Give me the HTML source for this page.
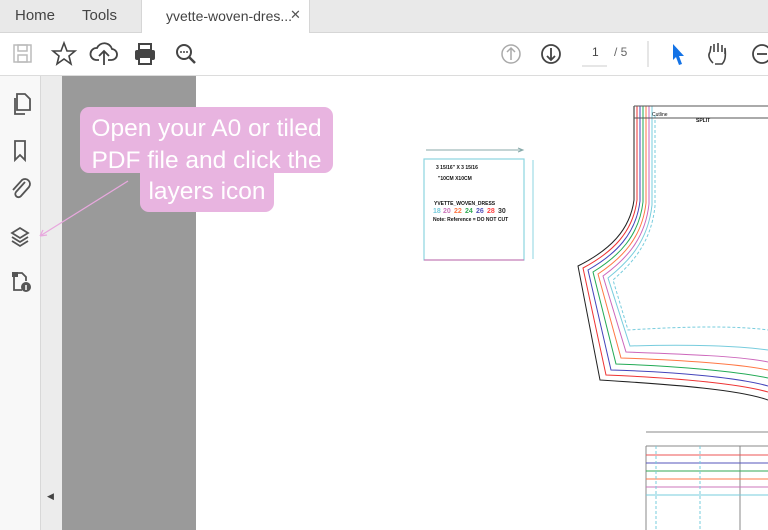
<!DOCTYPE html>
<html><head><meta charset="utf-8"><style>
body{margin:0;width:768px;height:530px;overflow:hidden;position:relative;font-family:"Liberation Sans","DejaVu Sans",sans-serif;background:#fff}
.tabs{position:absolute;left:0;top:0;width:768px;height:32px;background:#e9e9e9;border-bottom:1px solid #d6d6d6}
.t{position:absolute;top:7px;font-size:15px;color:#444}
.tab{position:absolute;left:141px;top:0;width:167px;height:33px;background:#fff;border-left:1px solid #d6d6d6;border-right:1px solid #d6d6d6}
.tb{position:absolute;top:33px;left:0;width:768px;height:42px;background:#fff;border-bottom:1px solid #dcdcdc}
.side{position:absolute;left:0;top:76px;width:40px;height:454px;background:#f8f8f8;border-right:1px solid #d8d8d8}
.strip{position:absolute;left:41px;top:76px;width:21px;height:454px;background:#ececec}
.gray{position:absolute;left:62px;top:76px;width:134px;height:454px;background:#9a9a9a}
.call{position:absolute;color:#fff;font-size:24.5px;line-height:33px;text-align:center;background:#e8b4e0;border-radius:9px;white-space:nowrap}
</style></head><body>
<div class="tabs"><span class="t" style="left:15px">Home</span><span class="t" style="left:82px">Tools</span>
<div class="tab"><span class="t" style="left:24px;font-size:14px;top:8px">yvette-woven-dres...</span><span class="t" style="left:148px;top:7px;font-size:13px;font-weight:bold;color:#555">✕</span></div></div>
<div class="tb">
<svg width="768" height="42" style="position:absolute;left:0;top:0" fill="none" stroke-width="2">
<rect x="14" y="12" width="17" height="17" stroke="#bbb" stroke-width="1.5"/><rect x="18" y="12" width="9" height="6" stroke="#bbb" stroke-width="1.5"/><rect x="18" y="22" width="9" height="7" stroke="#bbb" stroke-width="1.5"/>
<path d="M64 10 L67 18 L75 18 L69 23 L71 31 L64 26 L57 31 L59 23 L53 18 L61 18 Z" stroke="#444" stroke-width="1.6"/>
<path d="M99 27 H96 A6 6 0 0 1 97 15 A8 8 0 0 1 112 16 A5 5 0 0 1 111 27 H108 M104 32 V19 M99 23 L104 18 L109 23" stroke="#444" stroke-width="1.8"/>
<rect x="135" y="17" width="20" height="10" rx="2" fill="#444"/><rect x="139" y="11" width="12" height="6" stroke="#444"/><rect x="139" y="24" width="12" height="7" fill="#fff" stroke="#444"/>
<circle cx="184" cy="19" r="7" stroke="#444"/><path d="M189 24 L195 30" stroke="#444" stroke-width="2.5"/><circle cx="181" cy="19" r="1" fill="#444" stroke="none"/><circle cx="184" cy="19" r="1" fill="#444" stroke="none"/><circle cx="187" cy="19" r="1" fill="#444" stroke="none"/>
<circle cx="511" cy="21" r="9" stroke="#aaa" stroke-width="1.5"/><path d="M511 27 V15 M507 19 L511 15 L515 19" stroke="#aaa" stroke-width="1.5"/>
<circle cx="551" cy="21" r="9" stroke="#444" stroke-width="1.8"/><path d="M551 15 V27 M547 23 L551 27 L555 23" stroke="#444" stroke-width="1.8"/>
<path d="M582 33 H607" stroke="#ccc" stroke-width="1"/><path d="M648 8 V34" stroke="#ddd" stroke-width="1.5"/>
<path d="M673 11 L684 23 L679 23 L682 31 L679 32 L676 24 L673 27 Z" fill="#1473e6" stroke="none"/>
<path d="M713 30 C709 26 708 22 710 19 L711 13 M714 19 V11 M718 19 V10 M722 19 V12 M725 21 V15 C726 24 725 28 722 31 H715" stroke="#444" stroke-width="1.6"/>
<circle cx="762" cy="21" r="9" stroke="#444" stroke-width="1.8"/><path d="M757 21 H767" stroke="#444" stroke-width="1.8"/>
</svg>
<span style="position:absolute;left:592px;top:12px;font-size:12px;color:#444">1</span><span style="position:absolute;left:614px;top:12px;font-size:12px;color:#666">/ 5</span>
</div>
<div class="side"><svg width="40" height="230" fill="none" stroke="#555" stroke-width="1.8">
<path d="M15 22 V38 H25 M17 18 H25 L30 23 V34 H17 Z"/>
<path d="M15 65 V84 L20 79 L25 84 V65 Z"/>
<path d="M25 106 L16 116 A3 3 0 0 0 21 120 L29 111 A5 5 0 0 0 22 104 L13 114"/>
<path d="M20 152 L12 157 L20 162 L28 157 Z M12 161 L20 166 L28 161 M12 165 L20 170 L28 165"/>
<path d="M14 200 V214 H22 M14 197 H22 L26 201 V205" /><rect x="12" y="196" width="6" height="5" fill="#555" stroke="none"/><circle cx="26" cy="211" r="5" fill="#555" stroke="none"/><path d="M26 209 V214" stroke="#fff" stroke-width="1.5"/>
</svg></div>
<div class="strip"><span style="position:absolute;left:6px;top:415px;font-size:9px;color:#444">◀</span></div>
<div class="gray"></div>
<div class="call" style="left:80px;top:107px;width:253px;height:66px;padding-top:0;line-height:33px"><div style="margin-top:5px">Open your A0 or tiled</div><div style="margin-top:-1px">PDF file and click the</div></div>
<div class="call" style="left:140px;top:170px;width:134px;height:42px;line-height:44px;border-radius:0 0 9px 9px">layers icon</div>
<svg width="768" height="530" style="position:absolute;left:0;top:0" fill="none">
<path d="M128 181 L40 236 M40 236 L47 235 M40 236 L43 230" stroke="#e8a8de" stroke-width="1.3"/>
<path d="M426 150 H522 M518 148 L523 150 L518 152" stroke="#8aa"/>
<rect x="424" y="159" width="100" height="101" stroke="#8dd4e0" stroke-width="1.2"/><path d="M424 260 H524" stroke="#c6a"/>
<path d="M533 160 V259" stroke="#8dd4e0"/>
<g fill="#111" font-size="5" font-family="Liberation Sans" font-weight="bold"><text x="436" y="169">3 15/16" X 3 15/16</text><text x="438" y="180">"10CM X10CM</text><text x="434" y="205">YVETTE_WOVEN_DRESS</text><text x="433" y="221">Note: Reference = DO NOT CUT</text></g>
<g font-size="7" font-weight="bold" font-family="Liberation Sans"><text x="433" y="213" fill="#7cd">18</text><text x="443" y="213" fill="#c7b">20</text><text x="454" y="213" fill="#f74">22</text><text x="465" y="213" fill="#3a5">24</text><text x="476" y="213" fill="#55b">26</text><text x="487" y="213" fill="#f44">28</text><text x="498" y="213" fill="#333">30</text></g>
<g stroke-width="1">
<path d="M634 106 V200 C630 230 610 250 578 266 L600 380 C680 385 740 390 768 400" stroke="#222"/>
<path d="M637 106 V200 C633 232 613 252 583 268 L606 375 C680 378 740 384 768 392" stroke="#e33"/>
<path d="M640 106 V201 C636 234 616 254 588 270 L611 370 C680 372 740 378 768 386" stroke="#44b"/>
<path d="M643 106 V202 C639 236 619 256 593 272 L616 364 C680 366 740 372 768 378" stroke="#2a5"/>
<path d="M646 106 V203 C642 238 622 258 598 274 L621 358 C680 360 740 364 768 370" stroke="#f74"/>
<path d="M649 106 V204 C645 240 625 260 603 276 L626 352 C680 354 740 356 768 362" stroke="#c6b"/>
<path d="M652 106 V205 C648 242 628 262 608 278 L630 346 C690 344 740 346 768 350" stroke="#7cd"/>
<path d="M655 115 V206 C651 244 631 264 613 280 L628 330 C690 326 740 326 768 330" stroke="#7cd" stroke-dasharray="3 2"/>
<path d="M634 106 H768 M634 118 H768" stroke="#555"/>
<path d="M646 432 H768 M646 446 V530 M740 446 V530 M646 446 H768" stroke="#888"/>
<path d="M646 455 H768" stroke="#e55"/><path d="M646 463 H768" stroke="#55b"/><path d="M646 471 H768" stroke="#3a5"/><path d="M646 479 H768" stroke="#f74"/><path d="M646 487 H768" stroke="#c7b"/><path d="M646 495 H768" stroke="#7cd"/>
<path d="M656 446 V530 M700 446 V530" stroke="#7cd" stroke-dasharray="3 2"/>
</g>
<text x="652" y="116" font-size="5" fill="#111">Cutline</text><text x="696" y="122" font-size="5" fill="#111" font-weight="bold">SPLIT</text>
</svg>
</body></html>
